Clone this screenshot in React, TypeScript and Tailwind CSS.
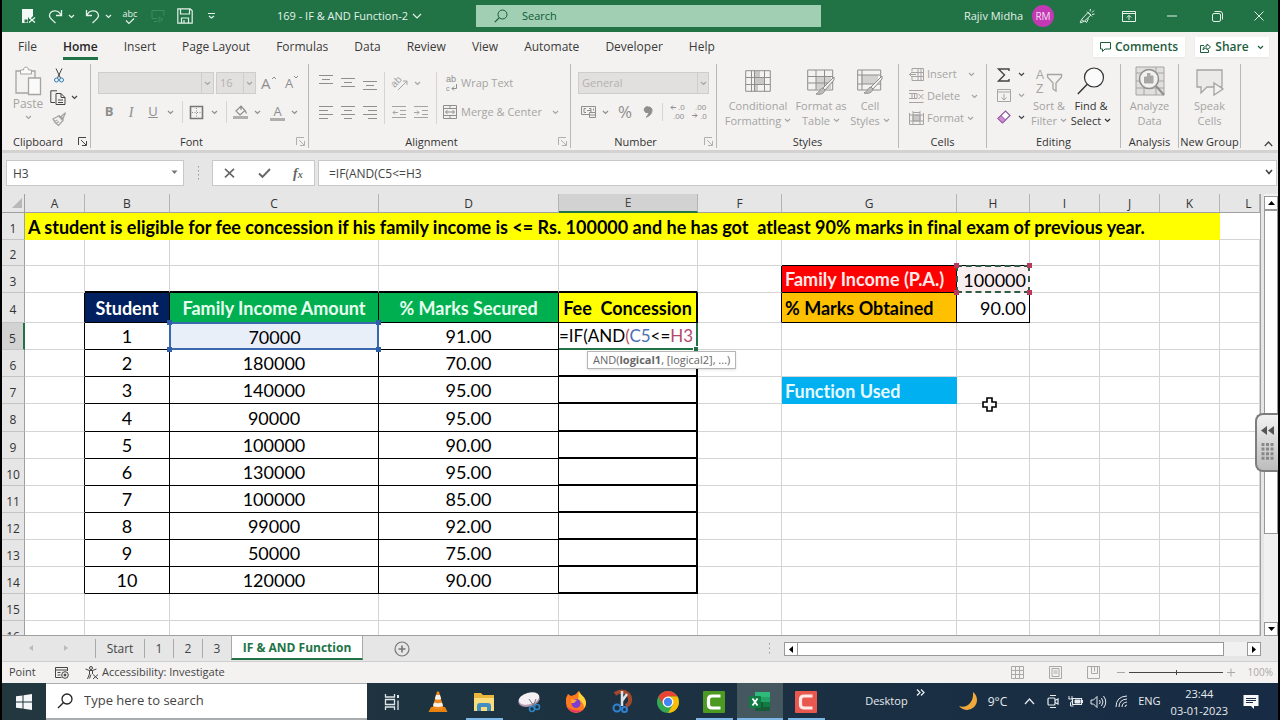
import React, { useState } from 'react'

const tabs = ["File", "Home", "Insert", "Page Layout", "Formulas", "Data", "Review", "View", "Automate", "Developer", "Help"]

const columns = [
    { name: "A", width: "w-[60px]" },
    { name: "B", width: "w-[85px]" },
    { name: "C", width: "w-[209px]" },
    { name: "D", width: "w-[180px]" },
    { name: "E", width: "w-[139px]" },
    { name: "F", width: "w-[84px]" },
    { name: "G", width: "w-[175px]" },
    { name: "H", width: "w-[73px]" },
    { name: "I", width: "w-[70px]" },
    { name: "J", width: "w-[60px]" },
    { name: "K", width: "w-[60px]" },
    { name: "L", width: "" },
]

const rowHeights = ["h-[27px]", "h-[26px]", "h-[27px]", "h-[30px]", "h-[27px]", "h-[27px]", "h-[27px]", "h-[28px]", "h-[27px]", "h-[27px]", "h-[27px]", "h-[27px]", "h-[27px]", "h-[27px]", "h-[27px]", "h-[27px]"]

const students = [
    [1, 70000, "91.00"],
    [2, 180000, "70.00"],
    [3, 140000, "95.00"],
    [4, 90000, "95.00"],
    [5, 100000, "90.00"],
    [6, 130000, "95.00"],
    [7, 100000, "85.00"],
    [8, 99000, "92.00"],
    [9, 50000, "75.00"],
    [10, 120000, "90.00"],
]

type IconProps = { w: number; h: number; className?: string; children: React.ReactNode }

const Icon = ({ w, h, className = "", children }: IconProps) => (
    <svg width={w} height={h} viewBox={`0 0 ${w} ${h}`} fill="none" stroke="currentColor" className={`shrink-0 overflow-visible ${className}`} aria-hidden="true">
        {children}
    </svg>
)

// letters and digits inside the ribbon icons
const Glyph = ({ x, y, size, rotate, children }: { x: number; y: number; size: number; rotate?: string; children: React.ReactNode }) => (
    <text x={x} y={y} fontSize={size} fontFamily="Liberation Sans, sans-serif" fill="currentColor" stroke="none" transform={rotate}>{children}</text>
)

const Chevron = ({ className = "" }: { className?: string }) => (
    <Icon w={7} h={5} className={className}><path d="M1 1l2.5 2.5L6 1" strokeWidth="1.2" /></Icon>
)

const Launcher = () => (
    <Icon w={9} h={9}><path d="M.5 8V.5H8M3 3l5 5M8.500 4v4.500H4" /></Icon>
)

type GroupProps = { label: string; className: string; launcher?: string; children: React.ReactNode }

const Group = ({ label, className, launcher, children }: GroupProps) => (
    <section className={`relative mb-[2px] flex shrink-0 flex-col justify-between border-r border-[#b9b8b6] ${className}`} aria-label={label}>
        <div className="flex h-[68px]">{children}</div>
        <div className={`flex h-3 items-center justify-center whitespace-nowrap text-[11px] font-medium leading-3 text-[#333] ${launcher ? "pr-[16px]" : ""}`}>{label}</div>
        {launcher && <button aria-label={`${label} settings`} className={`absolute bottom-[2px] right-[3px] ${launcher}`}><Launcher /></button>}
    </section>
)

type BigProps = { lines: string[]; className: string; chevron?: boolean; children: React.ReactNode }

const BigButton = ({ lines, className, chevron, children }: BigProps) => (
    <button className={`flex shrink-0 flex-col items-center whitespace-nowrap text-[11px] leading-[15px] ${className}`}>
        <span className="flex h-[34px] items-center">{children}</span>
        <span>{lines[0]}</span>
        <span className="flex items-center gap-[3px]">{lines[1]}{chevron && <Chevron />}</span>
    </button>
)

const Separator = ({ className = "" }: { className?: string }) => <span className={`w-px shrink-0 bg-[#d6d5d3] ${className}`} />

const TitleBar = () => (
    <header className="flex h-8 shrink-0 items-center bg-[#217346] text-[11px] text-[#e3f1e9]">
        <div className="flex w-[275px] shrink-0 items-center pl-[19px]">
            <button aria-label="Close file" className="flex w-[22px]">
                <Icon w={15} h={16}>
                    <path d="M1 1h11v7l-3 3-2-2v6H1z" fill="#f3faf6" stroke="none" />
                    <path d="M3.500 11.500h3v3h-3z" fill="#217346" stroke="none" />
                    <path d="M8 9.500l6 5M14 9.500l-6 5" stroke="#f3faf6" strokeWidth="1.200" />
                </Icon>
            </button>
            <button aria-label="Redo" className="flex w-[37px] items-center justify-center gap-[5px]">
                <Icon w={15} h={15}><path d="M13.500 1v5.500H8M13 6C10.500.5 4 .8 2 4.500c-1.500 3 0 4.500 5.500 9.500" strokeWidth="1.300" /></Icon>
                <Chevron />
            </button>
            <button aria-label="Undo" className="flex w-[36px] items-center justify-center gap-[5px]">
                <Icon w={15} h={15}><path d="M1.500 1v5.500H7M2 6C4.500.5 11 .8 13 4.500c1.500 3 0 4.500-5.500 9.500" strokeWidth="1.300" /></Icon>
                <Chevron />
            </button>
            <button aria-label="Spelling" className="flex w-[28px] flex-col items-center text-[9px] leading-[9px]">
                <span>abc</span>
                <Icon w={10} h={6}><path d="M1 2.500l3 3L9 .5" strokeWidth="1.200" /></Icon>
            </button>
            <button aria-label="Present" className="flex w-[27px] justify-center text-[#3d8a60]">
                <Icon w={14} h={14}><path d="M1 9.500V1.500h12v5M1 9.500h5M3 12.500h3M8 8v5l4-2.500z" /></Icon>
            </button>
            <button aria-label="Save" className="flex w-[28px] justify-center">
                <Icon w={16} h={16}><path d="M.8.8h12.400l2 2v12.400H.8zM3.500 1v5h9V1M4.500 15v-5h7v5M7 12v3" strokeWidth="1.200" /></Icon>
            </button>
            <button aria-label="Customize toolbar" className="flex w-[24px] justify-center">
                <Icon w={7} h={6}><path d="M0 .5h7M1 3l2.500 2L6 3" strokeWidth="1.200" /></Icon>
            </button>
        </div>
        <button className="flex w-[199px] shrink-0 items-center gap-1 whitespace-nowrap">
            169 - IF &amp; AND Function-2
            <Icon w={10} h={6}><path d="M1 1l4 4 4-4" strokeWidth="1.200" /></Icon>
        </button>
        <label className="flex h-[22px] w-[345px] items-center gap-[14px] bg-[#a0cfb4] pl-[18px] text-[#185c37]">
            <Icon w={14} h={14}><circle cx="8.500" cy="5.500" r="4.500" /><path d="M5.300 8.700L.8 13.200" strokeWidth="1.200" /></Icon>
            <input aria-label="Search" placeholder="Search" className="w-0 flex-1 bg-transparent text-[11px] outline-none placeholder:text-[#0f5a33]" />
        </label>
        <div className="ml-auto flex items-center">
            <button className="flex items-center gap-[9px] whitespace-nowrap">
                Rajiv Midha
                <span className="flex size-[22px] items-center justify-center rounded-full bg-[#c239b3] text-[10px] text-[#f8dff5]">RM</span>
            </button>
            <button aria-label="Coming soon" className="ml-3 flex w-[42px] justify-center">
                <Icon w={16} h={16}><path d="M9 4.500L2.500 11.500 1.200 14.800 5 13.500 12 7zM8 3.500l5 5M2.500 11.500L5 13.500M11 3.500L11.500 1M13 4.500l2-2M13 6.500l2.500-.5M6 13l1.500 1.500 2-4" /></Icon>
            </button>
            <button aria-label="Ribbon display options" className="flex w-[42px] justify-center">
                <Icon w={14} h={11}><path d="M.5.5h13v10H.5zM.5 2.500h13M7 9V4.500M4.800 6.500L7 4.300l2.200 2.200" /></Icon>
            </button>
            <button aria-label="Minimize" className="flex w-[44px] justify-center"><Icon w={11} h={2}><path d="M0 1h10" /></Icon></button>
            <button aria-label="Restore" className="flex w-[46px] justify-center">
                <Icon w={11} h={11}><path d="M.5 4a1.500 1.500 0 011.500-1.500h5A1.500 1.500 0 018.500 4v5A1.500 1.500 0 017 10.500H2A1.500 1.500 0 01.5 9zM2.500.5H8A2.500 2.500 0 0110.500 3v5.500" /></Icon>
            </button>
            <button aria-label="Close" className="flex w-[38px] justify-center"><Icon w={10} h={10}><path d="M.5.5l9 9M9.500.5l-9 9" /></Icon></button>
        </div>
    </header>
)

const RibbonTabs = () => {
    const [active, setActive] = useState("Home")

    return (
        <nav className="flex h-[30px] shrink-0 items-center bg-[#f3f2f1] pr-[9px] text-[12px] text-[#3b3a39]">
            <div className="flex gap-[26px] pl-[16px] pt-[1px]">
                {tabs.map((tab) => (
                    <button
                        key={tab}
                        onClick={() => setActive(tab)}
                        className={`flex h-[25px] items-center whitespace-nowrap border-b-[3px] pt-[2px] ${tab === active ? "border-[#217346] font-semibold text-[#262626]" : "border-transparent"}`}
                    >
                        {tab}
                    </button>
                ))}
            </div>
            <div className="ml-auto flex gap-[10px] font-semibold text-[#1d5c3c]">
                <button className="flex h-5 w-[92px] items-center justify-center gap-[4px] bg-white shadow-xs">
                    <Icon w={11} h={10}><path d="M.5.5h10v6.500H5L2.500 9.500V7h-2z" /></Icon>
                    Comments
                </button>
                <button className="flex h-5 w-[74px] items-center justify-center gap-[4px] bg-white shadow-xs">
                    <Icon w={11} h={11}><path d="M4 3.500H.5v7h8V8M3 8c0-3 2-4 4-4V2l3.500 3L7 8V6C5.500 6 4 6.500 3 8z" /></Icon>
                    Share
                    <Chevron className="ml-[4px]" />
                </button>
            </div>
        </nav>
    )
}

const Ribbon = () => (
    <div className="flex h-[88px] shrink-0 bg-[#f3f2f1] pt-[2px] text-[#a5a4a2]">
        <Group label="Clipboard" className="w-[89px]" launcher="text-[#444]">
            <button className="ml-3 flex w-[28px] flex-col items-center pt-[2px] text-[12px] leading-[15px]">
                <Icon w={26} h={30}>
                    <path d="M1 5h19v22H1z" fill="#f3f2f1" strokeWidth="1.300" />
                    <path d="M5.500 8V4h3c0-4 5-4 5 0h3v4z" fill="#fafafa" />
                    <path d="M13.500 12h12v16.500h-12z" fill="#fafafa" strokeWidth="1.300" />
                </Icon>
                Paste
                <Chevron className="mt-[4px]" />
            </button>
            <div className="ml-[8px] flex flex-col text-[#444]">
                <button aria-label="Cut" className="flex h-[22px] w-[18px] items-center justify-center">
                    <Icon w={10} h={15}><path d="M2 .5l4.500 9.500M8 .5L3.500 10" /><circle cx="2.500" cy="12" r="2" stroke="#2b7cb8" /><circle cx="7.500" cy="12" r="2" stroke="#2b7cb8" /></Icon>
                </button>
                <button aria-label="Copy" className="flex h-[22px] items-center gap-[5px]">
                    <Icon w={16} h={15}><path d="M5 12.500H.8V.8H7M6 3.500h5l4 4v7H6zM11 3.500v4h4M8 10h5M8 12.500h5" /></Icon>
                    <Chevron />
                </button>
                <button aria-label="Format painter" className="flex h-[22px] w-[18px] items-center justify-center text-[#a5a4a2]">
                    <Icon w={15} h={14}><path d="M13.500.8L9 4.500l2 2zM7 3.500l4.500 4.500M6.500 4L1 7c1 2.500 3 5 5.500 6.500L11 8.500zM3 9l2.500-1M4.500 11L7 9.500" strokeWidth="1.300" /></Icon>
                </button>
            </div>
        </Group>

        <Group label="Font" className="w-[218px]" launcher="text-[#b0afad]">
            <div className="flex flex-col gap-[7px] pl-[7px] pt-[8px]">
                <div className="flex h-[22px] items-center">
                    <span className="relative mr-[2px] flex">
                        <select aria-label="Font name" className="h-[22px] w-[116px] appearance-none border border-[#cfcdcb] bg-[#e2e0de]"><option value=""></option></select>
                        <span className="absolute right-[12px] top-[1px] h-5 w-px bg-[#cfcdcb]" />
                        <Chevron className="absolute right-[3px] top-[9px]" />
                    </span>
                    <span className="relative mr-[5px] flex">
                        <select aria-label="Font size" className="h-[22px] w-[40px] appearance-none border border-[#cfcdcb] bg-[#e2e0de] pl-[3px] text-[11px] text-[#b3b1af]"><option>16</option></select>
                        <span className="absolute right-[12px] top-[1px] h-5 w-px bg-[#cfcdcb]" />
                        <Chevron className="absolute right-[3px] top-[9px]" />
                    </span>
                    <button aria-label="Increase font size" className="flex w-[24px] text-[15px] leading-5 text-[#8f8e8c]">A<Icon w={6} h={5} className="mt-[2px]"><path d="M1 4l2-2 2 2" /></Icon></button>
                    <button aria-label="Decrease font size" className="flex w-[18px] text-[13px] leading-5 text-[#8f8e8c]">A<Icon w={6} h={5} className="mt-[2px]"><path d="M1 1l2 2 2-2" /></Icon></button>
                </div>
                <div className="flex h-[22px] items-center text-[13px] text-[#8f8e8c]">
                    <button aria-label="Bold" className="w-[22px] font-bold">B</button>
                    <button aria-label="Italic" className="w-[22px] font-['Liberation_Serif',serif] text-[14px] italic">I</button>
                    <button aria-label="Underline" className="w-[22px] underline">U</button>
                    <button aria-label="Underline style" className="flex w-[12px] justify-center"><Chevron /></button>
                    <Separator className="mx-[6px] h-[22px]" />
                    <button aria-label="Borders" className="flex items-center gap-[7px]">
                        <Icon w={15} h={15}><path d="M1.500 1.500h12v12h-12z" stroke="#777" strokeWidth="1.600" /><path d="M3 7.500h9M7.500 3v9" strokeDasharray="1 1.500" /></Icon>
                        <Chevron />
                    </button>
                    <Separator className="ml-[8px] mr-[6px] h-[22px]" />
                    <button aria-label="Fill color" className="flex items-center gap-[6px]">
                        <Icon w={15} h={16}><path d="M3 7l5-5 4 4.500-5 4.500zM8 2v4M12 6.500l1.500 3" strokeWidth="1.200" /><path d="M0 13.500h15" stroke="#b0afad" strokeWidth="3" /></Icon>
                        <Chevron />
                    </button>
                    <button aria-label="Font color" className="ml-[9px] flex items-center gap-[6px]">
                        <span className="w-[15px] border-b-[3px] border-[#b0afad] text-center leading-[14px]">A</span>
                        <Chevron />
                    </button>
                </div>
            </div>
        </Group>

        <Group label="Alignment" className="w-[262px]" launcher="text-[#b0afad]">
            <div className="flex pl-[10px] pt-[8px]">
                <div className="grid h-[51px] grid-cols-3 gap-x-[8px] gap-y-[7px] text-[#8f8e8c]">
                    <button aria-label="Top align"><Icon w={14} h={18}><path d="M0 1.500h14M3 5.500h8M0 9.500h14" /></Icon></button>
                    <button aria-label="Middle align"><Icon w={14} h={18}><path d="M0 4.500h14M3 8.500h8M0 12.500h14" /></Icon></button>
                    <button aria-label="Bottom align"><Icon w={14} h={18}><path d="M0 7.500h14M3 11.500h8M0 15.500h14" /></Icon></button>
                    <button aria-label="Align left"><Icon w={14} h={18}><path d="M0 3.500h14M0 7.500h9M0 11.500h14M0 15.500h9" /></Icon></button>
                    <button aria-label="Center"><Icon w={14} h={18}><path d="M0 3.500h14M3 7.500h8M0 11.500h14M3 15.500h8" /></Icon></button>
                    <button aria-label="Align right"><Icon w={14} h={18}><path d="M0 3.500h14M5 7.500h9M0 11.500h14M5 15.500h9" /></Icon></button>
                </div>
                <Separator className="mx-[7px] h-[52px]" />
                <div className="flex w-[44px] flex-col gap-[7px]">
                    <button aria-label="Orientation" className="flex h-[22px] items-center gap-[6px]">
                        <Icon w={16} h={16}><Glyph x={0} y={9} size={10} rotate="rotate(-45 6 8)">ab</Glyph><path d="M6 15l8.500-8.500M11 6h4v4" /></Icon>
                        <Chevron />
                    </button>
                    <div className="flex h-[22px] items-center gap-[8px]">
                        <button aria-label="Decrease indent"><Icon w={14} h={14}><path d="M0 1.500h14M8 5.500h6M8 9.500h6M0 12.500h14M6 7.500H1M3 5.500l-2 2 2 2" /></Icon></button>
                        <button aria-label="Increase indent"><Icon w={14} h={14}><path d="M0 1.500h14M8 5.500h6M8 9.500h6M0 12.500h14M0 7.500h5M3 5.500l2 2-2 2" /></Icon></button>
                    </div>
                </div>
                <Separator className="mr-[6px] h-[52px]" />
                <div className="flex flex-col gap-[7px] whitespace-nowrap text-[11px]">
                    <button className="flex h-[22px] items-center gap-[4px]">
                        <Icon w={14} h={16} className="text-[#8f8e8c]"><Glyph x={3} y={7} size={9}>ab</Glyph><Glyph x={3} y={16} size={7}>c</Glyph><path d="M13.500 9v4.500H9M11 11.500l-2 2 2 2" /></Icon>
                        Wrap Text
                    </button>
                    <button className="flex h-[22px] items-center gap-[4px]">
                        <Icon w={14} h={14} className="text-[#8f8e8c]"><path d="M.5.5h13v13H.5zM.5 3.500h13M.5 10.500h13M7 .5v3M7 10.500v3M2.500 7h9M4.500 5l-2 2 2 2M9.500 5l2 2-2 2" /></Icon>
                        Merge &amp; Center
                        <Chevron className="ml-[6px]" />
                    </button>
                </div>
            </div>
        </Group>

        <Group label="Number" className="w-[146px]" launcher="text-[#b0afad]">
            <div className="flex flex-col gap-[7px] pl-[7px] pt-[8px]">
                <span className="relative flex">
                    <select aria-label="Number format" className="h-[22px] w-[131px] appearance-none border border-[#cfcdcb] bg-[#e2e0de] pl-[3px] text-[11px] text-[#b3b1af]"><option>General</option></select>
                    <span className="absolute right-[12px] top-[1px] h-5 w-px bg-[#cfcdcb]" />
                    <Chevron className="absolute right-[3px] top-[9px]" />
                </span>
                <div className="flex h-[22px] items-center text-[#8f8e8c]">
                    <button aria-label="Accounting format" className="ml-[3px] flex items-center gap-[6px]">
                        <Icon w={15} h={12}><path d="M.5.5h14v8H.5zM5 2.500H3v4h2M8 2.500h2v4M6 4.500h4M12.500 2.500v2" /><path d="M8.500 6.500h6v5h-6zM8.500 9h6" fill="#f3f2f1" /></Icon>
                        <Chevron />
                    </button>
                    <button aria-label="Percent style" className="ml-[4px] w-[24px] text-[17px] leading-5">%</button>
                    <button aria-label="Comma style" className="flex w-[22px] justify-center"><Icon w={9} h={12}><path d="M4.500 1A3 3 0 103 6.700c1 .2 1.500-.1 2-.4C4.500 8.500 3.500 10 2 11.200 6 10 8 7.500 8 4.200A3.200 3.200 0 004.500 1z" fill="currentColor" /></Icon></button>
                    <Separator className="mx-[3px] h-[18px]" />
                    <button aria-label="Increase decimal" className="flex w-[22px] justify-center">
                        <Icon w={15} h={16}><path d="M6 3.500H1M3 1.500l-2 2 2 2" /><Glyph x={8} y={6} size={8}>.0</Glyph><Glyph x={3} y={15} size={8}>.00</Glyph></Icon>
                    </button>
                    <button aria-label="Decrease decimal" className="flex w-[22px] justify-center">
                        <Icon w={15} h={16}><Glyph x={3} y={6} size={8}>.00</Glyph><path d="M0 11.500h5M3 9.500l2 2-2 2" /><Glyph x={8} y={15} size={8}>.0</Glyph></Icon>
                    </button>
                </div>
            </div>
        </Group>

        <Group label="Styles" className="w-[182px]">
            <BigButton lines={["Conditional", "Formatting"]} className="ml-[6px] w-[70px]" chevron>
                <Icon w={26} h={22}><path d="M9 1h6v6H9zM9 8h10v6H9zM9 15h4v6H9z" fill="#c9c8c6" stroke="none" /><path d="M.7.700h24.600v20.600H.7zM.7 7.500h24.600M.7 14.500h24.600M6.500.7v20.600M19.500.7v20.600M9.500.7v20.600" stroke="#8f8e8c" /></Icon>
            </BigButton>
            <BigButton lines={["Format as", "Table"]} className="w-[56px]" chevron>
                <Icon w={28} h={28}><path d="M9 10h15v12H9z" fill="#d2d1cf" stroke="none" /><path d="M.7 3h25v20H.7zM.7 9.500h25M.7 16h25M9 3v20M17.500 3v20" stroke="#8f8e8c" /><path d="M27 10L16 21l2 2 9-10z" fill="#f3f2f1" stroke="#8f8e8c" /><path d="M16 21c-3 0-3 4-7 6 4 1 8 0 9-4z" fill="#bbb" stroke="#8f8e8c" /></Icon>
            </BigButton>
            <BigButton lines={["Cell", "Styles"]} className="w-[42px]" chevron>
                <Icon w={26} h={28}><path d="M4 8h17v9H4z" fill="#d2d1cf" stroke="none" /><path d="M.7 3h23v20H.7zM.7 8h23M.7 17h23M5 3v20" stroke="#8f8e8c" /><path d="M25 9L14 20l2 2 9-10z" fill="#f3f2f1" stroke="#8f8e8c" /><path d="M14 20c-3 0-3 4-7 6 4 1 8 0 9-4z" fill="#bbb" stroke="#8f8e8c" /></Icon>
            </BigButton>
        </Group>

        <Group label="Cells" className="w-[88px]">
            <div className="flex flex-col pl-[10px] text-[11px]">
                <button className="flex h-[21px] items-center gap-[3px]">
                    <Icon w={15} h={13}><path d="M3 .5h11.500v12H3M3 .5v3M3 9v3.500M3 4.500h11.500M3 8.500h11.500M9 .5v12M12 .5v12M7 6.500H0M3 4L.5 6.500 3 9" /></Icon>
                    Insert <Chevron className="ml-[8px]" />
                </button>
                <button className="flex h-[22px] items-center gap-[3px]">
                    <Icon w={15} h={13}><path d="M0 .5h14.500M0 3.500h8v5H0M3 3.500v5M5.500 3.500v5M0 12.500h14.500M9.500 4l5 5M14.500 4l-5 5" /></Icon>
                    Delete <Chevron className="ml-[8px]" />
                </button>
                <button className="flex h-[22px] items-center gap-[3px]">
                    <Icon w={15} h={14}><path d="M4 4h7v6H4z" fill="#c9c8c6" /><path d="M.5 4h14M.5 10h14M.5 2v11.500h14V2M4 0v13.500M11 0v13.500M4 1.500h7" /></Icon>
                    Format<Chevron />
                </button>
            </div>
        </Group>

        <Group label="Editing" className="w-[134px]">
            <div className="flex flex-col pl-[10px]">
                <button aria-label="AutoSum" className="flex h-[21px] items-center gap-[7px] text-[#444]">
                    <Icon w={14} h={14}><path d="M12 3V1H1.500l6 6-6 6H12v-2" strokeWidth="1.400" /></Icon><Chevron />
                </button>
                <button aria-label="Fill" className="flex h-[21px] items-center gap-[7px]">
                    <Icon w={14} h={13}><path d="M.5.5h13v12H.5zM.5 3h13M7 5v6M4.500 8.500L7 11l2.500-2.500" /></Icon><Chevron />
                </button>
                <button aria-label="Clear" className="flex h-[22px] items-center gap-[7px] text-[#444]">
                    <Icon w={14} h={14}><path d="M1 8.500L8.500 1 13 5.500 5.500 13z" fill="#fff" stroke="#8a5a9c" strokeWidth="1.200" /><path d="M1 8.500L4 5.500 8.500 10l-3 3z" fill="#d58ad8" stroke="#8a5a9c" /></Icon><Chevron />
                </button>
            </div>
            <BigButton lines={["Sort &", "Filter"]} className="ml-[5px] w-[38px]" chevron>
                <Icon w={28} h={28}><Glyph x={1} y={12} size={12}>A</Glyph><Glyph x={1} y={26} size={12}>Z</Glyph><path d="M12.500 7.500h14v2.500L21 16v8l-3-2v-6l-5.500-6z" strokeWidth="1.300" /></Icon>
            </BigButton>
            <BigButton lines={["Find &", "Select"]} className="ml-[3px] w-[40px] text-[#333]" chevron>
                <Icon w={28} h={28}><circle cx="17" cy="10.500" r="9.500" fill="#fbfbfb" strokeWidth="1.200" /><path d="M10 17.500L.8 27" strokeWidth="1.400" /></Icon>
            </BigButton>
        </Group>

        <Group label="Analysis" className="w-[58px]">
            <BigButton lines={["Analyze", "Data"]} className="w-full">
                <Icon w={30} h={30}><path d="M1 1h28v28H1zM1 7h28M1 15h28M1 22h28M9 15v14M21 1v28" fill="#e0dfdd" /><circle cx="14" cy="13" r="9.500" fill="#f1f1f1" stroke="#8f8e8c" strokeWidth="1.500" /><path d="M9.500 17v-6H12v6zM12.500 17V7.500H15V17zM15.500 17v-7H18v7z" fill="#aaa" /><path d="M21 20l8 9" stroke="#8f8e8c" strokeWidth="2" /></Icon>
            </BigButton>
        </Group>

        <Group label="New Group" className="w-[62px]">
            <BigButton lines={["Speak", "Cells"]} className="w-full">
                <Icon w={28} h={28}><path d="M1 3h25v17H11l-6 6v-6H1z" fill="#ebeae8" strokeWidth="1.300" /><path d="M18 16v12l9-6z" fill="#f3f2f1" strokeWidth="1.300" /></Icon>
            </BigButton>
        </Group>
        <button aria-label="Collapse ribbon" className="ml-auto mr-[5px] self-end pb-[3px] text-[#444]"><Icon w={9} h={6}><path d="M.8 5l3.700-4 3.700 4" strokeWidth="1.300" /></Icon></button>
    </div>
)

const FormulaBar = () => (
    <div className="flex h-[44px] shrink-0 items-start border-t-[3px] border-[#d3d2d1] bg-[#e6e6e6] pl-[4px] pr-[1px] pt-[7px] text-[12px] text-[#444]">
        <div className="relative">
            <input aria-label="Name box" defaultValue="H3" className="h-[26px] w-[178px] border border-[#c8c8c8] bg-white pl-[6px] outline-none" />
            <Icon w={7} h={5} className="absolute right-[6px] top-[10px]"><path d="M.5.500h6l-3 3.500z" fill="#777" stroke="none" /></Icon>
        </div>
        <Icon w={3} h={14} className="ml-[13px] mr-[12px] mt-[6px]"><path d="M1.500 0v14" stroke="#999" strokeDasharray="1.500 2.500" /></Icon>
        <div className="mr-[3px] flex h-[26px] w-[103px] items-center justify-around border border-[#c8c8c8] bg-white text-[#666]">
            <button aria-label="Cancel"><Icon w={11} h={10}><path d="M1 .8l9 8.500M10 .8L1 9.300" strokeWidth="1.600" /></Icon></button>
            <button aria-label="Enter"><Icon w={13} h={10}><path d="M1 5.500l3.500 3.300L12 1" strokeWidth="1.900" /></Icon></button>
            <button aria-label="Insert function" className="font-['Liberation_Serif',serif] text-[14px] font-bold italic">f<span className="text-[10px]">x</span></button>
        </div>
        <div className="relative flex-1">
            <input aria-label="Formula" defaultValue="=IF(AND(C5<=H3" className="h-[26px] w-full border border-[#c8c8c8] bg-white pl-[10px] outline-none" />
            <Icon w={8} h={6} className="absolute right-[4px] top-[9px]"><path d="M1 1l3 3.500L7 1" strokeWidth="1.600" /></Icon>
        </div>
    </div>
)

const grid = "border-[#d4d4d4]"
const boxed = "border-b border-r border-black"

const Handles = ({ color }: { color: string }) => (
    <>
        <span className={`absolute -left-[4px] -top-[4px] size-[5px] ${color}`} />
        <span className={`absolute -right-[4px] -top-[4px] size-[5px] ${color}`} />
        <span className={`absolute -bottom-[4px] -left-[4px] size-[5px] ${color}`} />
        <span className={`absolute -bottom-[4px] -right-[4px] size-[5px] ${color}`} />
    </>
)

const renderCell = (row: number, col: string) => {
    const key = col + row
    const student = students[row - 5]

    // headings of the marks table
    if (key === "B4") return <td key={key} className={`${boxed} bg-[#002060] text-center font-bold text-white`}>Student</td>
    if (key === "C4") return <td key={key} className={`${boxed} bg-[#00b050] text-center font-bold text-[#e8fff0]`}>Family Income Amount</td>
    if (key === "D4") return <td key={key} className={`${boxed} bg-[#00b050] text-center font-bold text-[#e8fff0]`}>% Marks Secured</td>
    if (key === "E4") return <td key={key} className="whitespace-pre border-b border-r-2 border-black bg-[#ffff00] text-center font-bold">Fee  Concession</td>

    // criteria on the right
    if (key === "G3") return <td key={key} className={`${boxed} whitespace-nowrap bg-[#ff0000] pl-[3px] font-bold text-[#ffe9e9]`}>Family Income (P.A.)</td>
    if (key === "H3") return (
        <td key={key} className="relative bg-[#f9eef0] pr-[4px] text-right">
            100000
            <span className="absolute -left-px -top-px bottom-0 right-0 border-2 border-dashed border-[#2f5d46]"><Handles color="bg-[#b8395a]" /></span>
        </td>
    )
    if (key === "G4") return <td key={key} className={`${boxed} bg-[#ffc000] pl-[3px] font-bold`}>% Marks Obtained</td>
    if (key === "H4") return <td key={key} className={`${boxed} pr-[3px] text-right`}>90.00</td>
    if (key === "G7") return <td key={key} className="bg-[#00b0f0] pl-[3px] font-bold text-[#e6faff]">Function Used</td>

    // marks table
    if (student && col === "B") return <td key={key} className={`${boxed} text-center`}>{student[0]}</td>
    if (key === "C5") return (
        <td key={key} className="relative bg-[#e9eff9] text-center">
            {student[1]}
            <span className="absolute -left-px -top-px bottom-0 right-0 border-2 border-[#3a68ad]"><Handles color="bg-[#2f5fa8]" /></span>
        </td>
    )
    if (student && col === "C") return <td key={key} className={`${boxed} text-center`}>{student[1]}</td>
    if (student && col === "D") return <td key={key} className={`${boxed} text-center`}>{student[2]}</td>
    if (key === "E5") return (
        <td key={key} className="relative whitespace-nowrap border-b-2 border-r-2 border-[#217346] text-left text-[17px]">
            =IF(AND<span className="text-[#c0504d]">(</span><span className="text-[#4a6fb5]">C5</span>&lt;=<span className="text-[#b5496a]">H3</span>
            <span className="absolute -bottom-[3px] -right-[2px] size-[5px] border-l border-t border-white bg-[#217346]" />
            <span className="absolute left-[28px] top-[28px] z-20 flex h-[18px] items-center border border-[#b5b5b5] bg-white px-[5px] font-['Open_Sans','Noto_Sans',sans-serif] text-[11px] text-[#666] shadow-sm">
                AND(<b>logical1</b>, [logical2], ...)
            </span>
        </td>
    )
    if (student && col === "E") return <td key={key} className="border-b-2 border-r-2 border-black" />

    // neighbours carry the outer edges of the boxes
    if (row === 3 && "BCDE".includes(col)) return <td key={key} className={`border-b-2 border-r border-b-black ${col === "B" ? "border-r-[#d4d4d4]" : "border-r-[#d4d4d4]"}`} />
    if (row >= 4 && row <= 14 && col === "A") return <td key={key} className="border-b border-r border-b-[#d4d4d4] border-r-black" />
    if (key === "G2" || key === "H2") return <td key={key} className="border-b border-r border-b-black border-r-[#d4d4d4]" />
    if ((row === 3 || row === 4) && col === "F") return <td key={key} className="border-b border-r border-b-[#d4d4d4] border-r-black" />
    return <td key={key} className={`border-b border-r ${grid}`} />
}

const Sheet = () => (
    <div className="relative flex min-h-0 flex-1 bg-[#e6e6e6]">
        <div className="min-w-0 flex-1 overflow-hidden border-b border-r border-[#9f9f9f] bg-white">
            <table className="w-full table-fixed border-separate border-spacing-0 font-['Lato','Carlito',sans-serif] text-[18px] leading-5 text-black [font-variant-ligatures:none]">
                <thead className="font-['Open_Sans','Noto_Sans',sans-serif] text-[12px] text-[#333]">
                    <tr className="h-[18px] bg-[#e6e6e6]">
                        <th className="w-[23px] border-b border-r border-[#9f9f9f]" aria-label="Select all">
                            <Icon w={12} h={12} className="ml-[9px]"><path d="M11 1v10H1z" fill="#b8b8b8" stroke="none" /></Icon>
                        </th>
                        {columns.map((c) => (
                            <th
                                key={c.name}
                                className={`${c.width} h-[18px] border-r text-center font-normal leading-[17px] ${c.name === "E" ? "border-b-2 border-b-[#217346] border-r-[#b4b4b4] bg-[#d2d2d2] text-[#444]" : "border-b border-b-[#9f9f9f] border-r-[#b4b4b4]"} ${c.name === "L" ? "pl-[18px]" : ""}`}
                            >
                                {c.name}
                            </th>
                        ))}
                    </tr>
                </thead>
                <tbody>
                    {rowHeights.map((height, i) => {
                        const row = i + 1
                        return (
                            <tr key={row} className={height}>
                                <th className={`border-b border-b-[#c4c4c4] pt-[5px] text-center font-['Open_Sans','Noto_Sans',sans-serif] text-[12px] font-normal leading-4 text-[#333] ${row === 5 ? "border-r-2 border-r-[#217346] bg-[#d2d2d2]" : "border-r border-r-[#9f9f9f] bg-[#e6e6e6]"}`}>{row}</th>
                                {row === 1 ? (
                                    <>
                                        <td colSpan={11} className="whitespace-pre bg-[#ffff00] pl-[3px] font-bold">A student is eligible for fee concession if his family income is &lt;= Rs. 100000 and he has got  atleast 90% marks in final exam of previous year.</td>
                                        <td className={`border-b ${grid}`} />
                                    </>
                                ) : (
                                    columns.map((c) => renderCell(row, c.name))
                                )}
                            </tr>
                        )
                    })}
                </tbody>
            </table>
        </div>
        <div className="ml-[3px] flex w-[14px] shrink-0 flex-col bg-[#f1f1f1] pt-[2px]">
            <button aria-label="Scroll up" className="flex h-[14px] items-center justify-center border border-[#999] bg-white text-black"><Icon w={7} h={4}><path d="M0 4h7L3.500 0z" fill="currentColor" stroke="none" /></Icon></button>
            <span className="h-[324px] border border-[#999] bg-white" />
            <button aria-label="Scroll down" className="mt-auto flex h-[14px] items-center justify-center border border-[#999] bg-white text-black"><Icon w={7} h={4}><path d="M0 0h7L3.500 4z" fill="currentColor" stroke="none" /></Icon></button>
        </div>
        {/* side drawer handle */}
        <button aria-label="Open side drawer" className="absolute right-0 top-[219px] z-20 flex h-[59px] w-[23px] flex-col items-center justify-center gap-[8px] rounded-l-lg border-2 border-r-0 border-[#7d7d7d] bg-linear-to-b from-[#f2f2f2] to-[#bcbcbc] text-[#555]">
            <Icon w={13} h={9}><path d="M6 0v9L0 4.500zM13 0v9L7 4.500z" fill="currentColor" stroke="none" /></Icon>
            <Icon w={13} h={17}><path d="M2 0v17M6.500 0v17M11 0v17" stroke="#888" strokeWidth="3" strokeDasharray="3 1.600" /></Icon>
        </button>
        {/* cross pointer over H8 */}
        <Icon w={15} h={15} className="absolute left-[980px] top-[203px] z-20"><path d="M5 1h5v4h4v5h-4v4H5v-4H1V5h4z" fill="#fff" stroke="#000" strokeWidth="1.600" /></Icon>
    </div>
)

const SheetTabs = () => {
    const sheets = [
        { name: "Start", width: "w-[49px]" },
        { name: "1", width: "w-[29px]" },
        { name: "2", width: "w-[29px]" },
        { name: "3", width: "w-[29px]" },
    ]

    return (
        <div className="flex h-[26px] shrink-0 items-start border-b border-[#cfcfcf] bg-[#e6e6e6] text-[12px] text-[#444]">
            <div className="flex h-[24px] w-[93px] items-center justify-around px-[12px] text-[#bbb]">
                <Icon w={4} h={6}><path d="M4 0v6L0 3z" fill="currentColor" stroke="none" /></Icon>
                <Icon w={4} h={6}><path d="M0 0v6l4-3z" fill="currentColor" stroke="none" /></Icon>
            </div>
            {sheets.map((s) => (
                <button key={s.name} className={`${s.width} mt-[3px] h-[19px] border-l border-[#aaa] leading-[18px]`}>{s.name}</button>
            ))}
            <button className="h-[24px] w-[132px] whitespace-nowrap border-x border-b-2 border-x-[#aaa] border-b-[#217346] bg-white pt-[1px] font-bold leading-[22px] text-[#217346]">IF &amp; AND Function</button>
            <button aria-label="New sheet" className="ml-[31px] mt-[5px] text-[#777]"><Icon w={16} h={16}><circle cx="8" cy="8" r="7" strokeWidth="1.200" /><path d="M8 4.500v7M4.500 8h7" strokeWidth="1.600" /></Icon></button>
            <Icon w={3} h={12} className="ml-auto mr-[13px] mt-[7px]"><path d="M1.500 0v12" stroke="#999" strokeDasharray="1.500 3" /></Icon>
            <div className="mr-[17px] mt-[6px] flex h-[14px] w-[477px] bg-[#f1f1f1]">
                <button aria-label="Scroll left" className="flex w-[14px] items-center justify-center border border-[#999] bg-white text-black"><Icon w={4} h={7}><path d="M4 0v7L0 3.500z" fill="currentColor" stroke="none" /></Icon></button>
                <span className="w-[426px] border border-l-0 border-[#999] bg-white" />
                <button aria-label="Scroll right" className="ml-auto flex w-[14px] items-center justify-center border border-[#999] bg-white text-black"><Icon w={4} h={7}><path d="M0 0v7l4-3.500z" fill="currentColor" stroke="none" /></Icon></button>
            </div>
        </div>
    )
}

const StatusBar = () => (
    <div className="flex h-[21px] shrink-0 items-center bg-[#f3f2f1] pl-[7px] pr-[5px] text-[11px] text-[#444]">
        <span className="w-[46px]">Point</span>
        <button aria-label="Record macro" className="w-[30px]"><Icon w={14} h={12}><path d="M12.500 4V.5H.5v10h6M.5 3h12M2.500 5.500h3M2.500 8h3" /><circle cx="10" cy="8" r="3.300" /><circle cx="10" cy="8" r="1" fill="currentColor" /></Icon></button>
        <button className="flex items-center gap-[3px] whitespace-nowrap">
            <Icon w={14} h={14}><circle cx="6" cy="2" r="1.500" /><path d="M.5 3l4 1.500v3.500l-2 5M11.500 3l-4 1.500V8M4.500 4.500h3M6 8.500l-1.500 4M8 8.500l5 4.500M13 8.500L8 13" /></Icon>
            Accessibility: Investigate
        </button>
        <div className="ml-auto flex items-center text-[#a9a8a6]">
            <button aria-label="Normal view"><Icon w={13} h={13}><path d="M.5.5h12v12H.5zM.5 4.500h12M.5 8.500h12M4.500.5v12M8.500.5v12" /></Icon></button>
            <button aria-label="Page layout view" className="ml-[25px]"><Icon w={13} h={13}><path d="M.5.5h12v12H.5zM3 2.500h7v8H3zM4.500 5h4M4.500 7h4" /></Icon></button>
            <button aria-label="Page break view" className="ml-[25px]"><Icon w={13} h={13}><path d="M.5.5h12v12H.5zM4.500.5v7h6V.5M7.500.5v5" /></Icon></button>
            <button aria-label="Zoom out" className="ml-[17px]"><Icon w={8} h={9}><path d="M0 4.500h8" /></Icon></button>
            <Icon w={94} h={9} className="mx-[4px] text-[#444]"><path d="M0 4.500h94M47.500 2v5" /></Icon>
            <button aria-label="Zoom in"><Icon w={8} h={9}><path d="M0 4.500h8M4 .5v8" /></Icon></button>
            <span className="ml-[12px] w-[26px] text-right text-[10px]">100%</span>
        </div>
    </div>
)

const apps = [
    {
        name: "Task view", state: "", icon: (
            <Icon w={16} h={16} className="text-[#dfe6e8]"><path d="M1.500 0v3h9V0M1.500 5.500h9v5h-9zM1.500 16v-3h9v3M14 6.500V16" strokeWidth="1.300" /><path d="M14 1v3" strokeWidth="2" /></Icon>
        ),
    },
    {
        name: "VLC", state: "", icon: (
            <Icon w={20} h={22}><path d="M3 16h14l2.500 5H.5z" fill="#e8820e" stroke="none" /><path d="M9 .5h2L15.500 17q-5.500 3-11 0z" fill="#f08a1c" stroke="none" /><path d="M8 4h4l1.200 4q-3.200 1.500-6.400 0zM6 11.500q4 1.500 8 0l1 3.500q-5 2-10 0z" fill="#f6f1ea" stroke="none" /></Icon>
        ),
    },
    {
        name: "File Explorer", state: "open", icon: (
            <Icon w={22} h={20}><path d="M1 1h7l2 2h11v15H1z" fill="#e9b53d" stroke="none" /><path d="M1 6h20v13H1z" fill="#f9dc7c" stroke="none" /><path d="M4 19v-5q0-3 3-3h8q3 0 3 3v5h-4v-4H8v4z" fill="#3f8fc4" stroke="none" /></Icon>
        ),
    },
    {
        name: "Snip", state: "", icon: (
            <Icon w={24} h={22}><ellipse cx="11" cy="9" rx="11" ry="6.500" fill="#b59ab0" stroke="none" transform="rotate(-15 11 9)" /><ellipse cx="11" cy="7.500" rx="10.500" ry="5.800" fill="#f3eff2" stroke="none" transform="rotate(-15 11 7.500)" /><path d="M11 8l5 7M18 8l-3 7" stroke="#777" /><circle cx="14" cy="18" r="2.500" stroke="#2f82c2" strokeWidth="1.600" /><circle cx="19" cy="16" r="2.500" stroke="#2f82c2" strokeWidth="1.600" /></Icon>
        ),
    },
    {
        name: "Firefox", state: "", icon: (
            <Icon w={22} h={22}><path d="M1 7l2-4 3 2 3-1c2 0 3-3 5-4 1 4 7 6 7 12a10 10 0 01-20 0c0-2 0-3 0-5z" fill="#ff7a1f" stroke="none" /><path d="M14 0c1 4 7 6 7 12 0 2-1 4-2 5 0-5-3-7-6-9 1-3 0-5 1-8z" fill="#ffd23c" stroke="none" /><path d="M2 15a10 10 0 0016 4c-5 1-12 1-16-4z" fill="#f0306a" stroke="none" /><circle cx="11" cy="12.500" r="4.500" fill="#7d3fd0" stroke="none" /><path d="M6 8l6 1-3 3H6z" fill="#ffa436" stroke="none" /></Icon>
        ),
    },
    {
        name: "Snipping Tool", state: "", icon: (
            <Icon w={20} h={22}><path d="M3 3q7-5 13 0c4 5 2 10-2 12" stroke="#a4482c" strokeWidth="4" /><path d="M10 0v15M10 10l5-7" stroke="#dce3e8" strokeWidth="2.500" /><circle cx="5" cy="17" r="3.500" stroke="#2f82d2" strokeWidth="2" /><circle cx="12.500" cy="18.500" r="2.500" stroke="#2f82d2" strokeWidth="2" /></Icon>
        ),
    },
    {
        name: "Chrome", state: "", icon: (
            <Icon w={22} h={22}><circle cx="11" cy="11" r="11" fill="#34a853" stroke="none" /><path d="M1.500 5.500A11 11 0 0120.500 5.500H11L6.200 13.700z" fill="#ea4335" stroke="none" /><path d="M20.500 5.500A11 11 0 0111 22l4.800-8.300L11 5.500z" fill="#fbbc05" stroke="none" /><circle cx="11" cy="11" r="4.800" fill="#4285f4" stroke="#fff" strokeWidth="1.300" /></Icon>
        ),
    },
    {
        name: "Camtasia", state: "open", icon: (
            <Icon w={22} h={22}><rect width="22" height="22" rx="1" fill="#4d9a22" stroke="none" /><path d="M17.500 5H9Q5.500 5 5.500 8.500v5Q5.500 17 9 17h8.500" stroke="#fff" strokeWidth="3.200" /></Icon>
        ),
    },
    {
        name: "Excel", state: "active", icon: (
            <Icon w={22} h={20}><path d="M6 0h15v5H6z" fill="#2fb97a" stroke="none" /><path d="M6 5h15v5H6z" fill="#21a366" stroke="none" /><path d="M6 10h15v9H6z" fill="#185c37" stroke="none" /><path d="M14 10h7v5h-7z" fill="#107c41" stroke="none" /><rect y="4" width="12" height="12" rx="1" fill="#107c41" stroke="none" /><path d="M3.500 6.500l5 7M8.500 6.500l-5 7" stroke="#fff" strokeWidth="1.800" /></Icon>
        ),
    },
    {
        name: "Camtasia Recorder", state: "open", icon: (
            <Icon w={22} h={22}><rect width="22" height="22" rx="1" fill="#e8584f" stroke="none" /><path d="M17.500 5H9Q5.500 5 5.500 8.500v5Q5.500 17 9 17h8.500" stroke="#ffe9e6" strokeWidth="3.200" /></Icon>
        ),
    },
]

const Taskbar = () => (
    <footer className="flex h-[37px] shrink-0 items-stretch bg-linear-to-r from-[#22373e] to-[#172b44] text-[11px] text-[#e6ebee]">
        <button aria-label="Start" className="flex w-[44px] items-center justify-center">
            <Icon w={16} h={16}><path d="M0 2.300L6.500 1.400v6.100H0zM7.500 1.200L16 0v7.500H7.500zM0 8.500h6.500v6.100L0 13.700zM7.500 8.500H16V16l-8.500-1.200z" fill="#f4f6f7" stroke="none" /></Icon>
        </button>
        <label className="flex w-[321px] items-center gap-[11px] border-b-2 border-t border-[#a9adb0] bg-white pl-[11px] text-[#222]">
            <Icon w={16} h={16}><circle cx="10" cy="6" r="5" strokeWidth="1.300" /><path d="M6.300 9.700L1 15" strokeWidth="1.300" /></Icon>
            <input aria-label="Type here to search" placeholder="Type here to search" className="w-0 flex-1 bg-transparent text-[13px] outline-none placeholder:text-[#444]" />
        </label>
        <div className="flex pl-[2px]">
            {apps.map((app) => (
                <button key={app.name} aria-label={app.name} className={`relative flex w-[46px] items-center justify-center ${app.state === "active" ? "bg-[#46585f]" : ""}`}>
                    {app.icon}
                    {app.state === "open" && <span className="absolute bottom-0 h-[2px] w-[37px] bg-[#7db7e8]" />}
                    {app.state === "active" && <span className="absolute bottom-0 h-[2px] w-full bg-[#7db7e8]" />}
                </button>
            ))}
        </div>
        <div className="ml-auto flex items-center">
            <button className="mr-[8px]">Desktop</button>
            <button aria-label="More" className="mb-[18px] mr-[34px]"><Icon w={9} h={7}><path d="M1 .5l3 3-3 3M5 .5l3 3-3 3" strokeWidth="1.300" /></Icon></button>
            <button className="mr-[17px] flex items-center gap-[9px] text-[12px]">
                <Icon w={20} h={20}><path d="M14 0a10 10 0 11-14 14c7 3 15-3 14-14z" fill="#f2a93b" stroke="none" /></Icon>
                9°C
            </button>
            <div className="flex items-center">
                <Icon w={11} h={7} className="mr-[12px]"><path d="M1 6l4.500-5L10 6" strokeWidth="1.300" /></Icon>
                <Icon w={12} h={15} className="mr-[9px]"><rect x="1" y="4" width="7" height="7" rx="1" strokeWidth="1.200" /><path d="M8 6.500L11 5v5L8 8.500M3 1.500h6M3 13.500h6" strokeWidth="1.200" /></Icon>
                <Icon w={15} h={11} className="mr-[7px]"><path d="M4.500 2.500h9v6h-9z" strokeWidth="1.200" /><path d="M7 4h5v3H7z" fill="currentColor" /><path d="M14.500 4v3M1 0v3M4 0v3M.5 3h4v2l-2 1.500V10h3" /></Icon>
                <Icon w={17} h={14} className="mr-[8px]"><path d="M1 5h2.500L7 1.500v11L3.500 9H1zM9.500 5q1.500 2 0 4M11.500 3q3 4 0 8M13.500 1q4.500 6 0 12" /></Icon>
                <Icon w={13} h={13} className="mr-[10px]"><path d="M1 12Q1 1.500 12 1M4 12Q4 4.500 12 4M7 12Q7 7.500 12 7M10 12q0-2 2-2" /></Icon>
            </div>
            <span className="mr-[10px]">ENG</span>
            <div className="mr-[15px] flex flex-col items-center leading-[17px]">
                <span>23:44</span>
                <span>03-01-2023</span>
            </div>
            <button aria-label="Notifications" className="mr-[19px]"><Icon w={16} h={16}><path d="M.5 1h15v11h-4.500v3L8 12H.5z" fill="#f6f8f9" stroke="none" /><path d="M3 4.500h10M3 6.500h10M3 8.500h7" stroke="#1a2d42" /></Icon></button>
        </div>
    </footer>
)

const App = () => {
    return (
        <main className="flex h-screen flex-col overflow-hidden border-x-2 border-black bg-[#e6e6e6] font-['Open_Sans','Noto_Sans',sans-serif]">
            <TitleBar />
            <RibbonTabs />
            <Ribbon />
            <FormulaBar />
            <Sheet />
            <SheetTabs />
            <StatusBar />
            <Taskbar />
        </main>
    )
}

export default App
